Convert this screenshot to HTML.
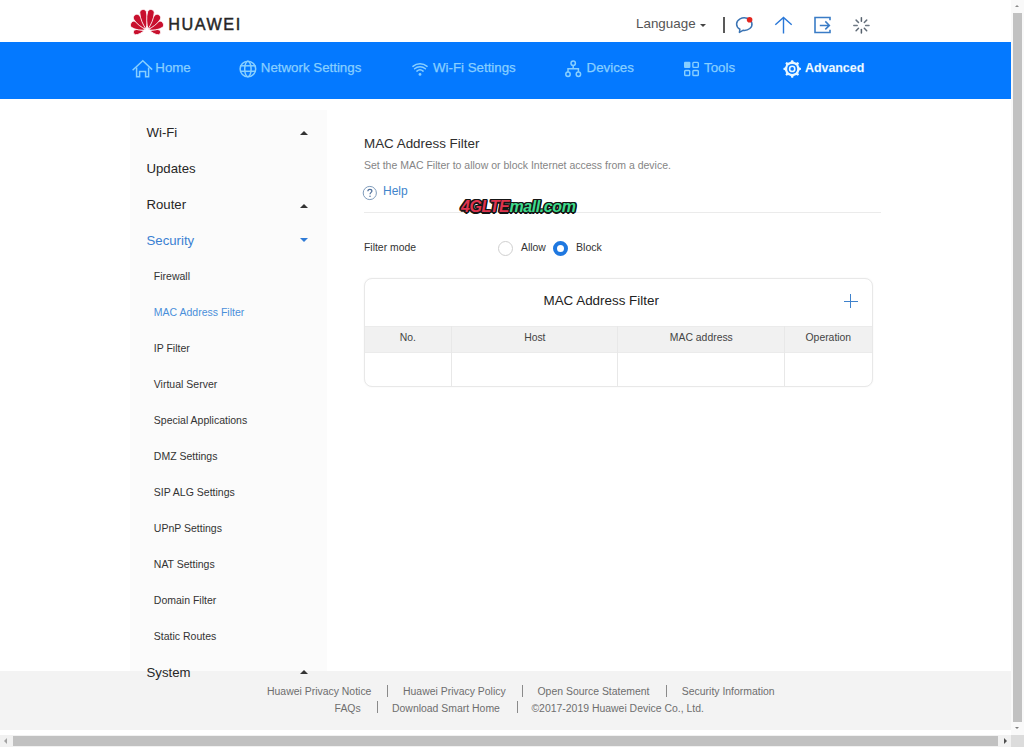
<!DOCTYPE html>
<html><head><meta charset="utf-8">
<style>
*{margin:0;padding:0;box-sizing:border-box}
html,body{width:1024px;height:747px;overflow:hidden;background:#fff;font-family:"Liberation Sans",sans-serif;color:#333}
.a{position:absolute;white-space:nowrap;line-height:1}
#hdr{position:absolute;left:0;top:0;width:1011px;height:42px;background:#fff}
#nav{position:absolute;left:0;top:42px;width:1011px;height:56.5px;background:#0479ff}
.nv{color:#88cfff;font-size:13.3px;-webkit-text-stroke:0.25px #88cfff}
#side{position:absolute;left:130px;top:110px;width:197px;height:561px;background:#fbfbfb}
.m{font-size:13.2px;color:#262626}
.s{font-size:10.5px;color:#333}
.car{position:absolute;width:0;height:0;border-left:4px solid transparent;border-right:4px solid transparent}
.up{border-bottom:4.4px solid #333}
.dn{border-top:4.4px solid #2f7bd6}
#foot{position:absolute;left:0;top:671px;width:1011px;height:58.5px;background:#f3f3f3}
.f{font-size:10.45px;color:#6e6e6e}
.th{font-size:10.4px;color:#444}
</style></head><body>
<div id="hdr"></div>
<!-- logo -->
<svg class="a" style="left:126px;top:4px" width="44" height="34" viewBox="0 0 44 34">
 <g fill="#c8102e" stroke="#fff" stroke-width="0.8" transform="translate(21,25)">
  <path d="M0,0 C-1.45,-2.12 -3.04,-5.83 -2.46,-9.12 C-1.74,-10.92 1.74,-10.92 2.46,-9.12 C3.04,-5.83 1.45,-2.12 0,0Z" transform="translate(-3.2,1.8) rotate(-100)"/>
  <path d="M0,0 C-1.45,-2.12 -3.04,-5.83 -2.46,-9.12 C-1.74,-10.92 1.74,-10.92 2.46,-9.12 C3.04,-5.83 1.45,-2.12 0,0Z" transform="scale(-1,1) translate(-3.2,1.8) rotate(-100)"/>
  <path d="M0,0 C-2.00,-3.20 -4.20,-8.80 -3.40,-13.76 C-2.40,-16.48 2.40,-16.48 3.40,-13.76 C4.20,-8.80 2.00,-3.20 0,0Z" transform="translate(-1.8,1.0) rotate(-65)"/>
  <path d="M0,0 C-2.00,-3.20 -4.20,-8.80 -3.40,-13.76 C-2.40,-16.48 2.40,-16.48 3.40,-13.76 C4.20,-8.80 2.00,-3.20 0,0Z" transform="scale(-1,1) translate(-1.8,1.0) rotate(-65)"/>
  <path d="M0,0 C-2.00,-3.68 -4.20,-10.12 -3.40,-15.82 C-2.40,-18.95 2.40,-18.95 3.40,-15.82 C4.20,-10.12 2.00,-3.68 0,0Z" transform="translate(-1.1,0.4) rotate(-38)"/>
  <path d="M0,0 C-2.00,-3.68 -4.20,-10.12 -3.40,-15.82 C-2.40,-18.95 2.40,-18.95 3.40,-15.82 C4.20,-10.12 2.00,-3.68 0,0Z" transform="scale(-1,1) translate(-1.1,0.4) rotate(-38)"/>
  <path d="M0,0 C-1.95,-4.00 -4.09,-11.00 -3.31,-17.20 C-2.34,-20.60 2.34,-20.60 3.31,-17.20 C4.09,-11.00 1.95,-4.00 0,0Z" transform="translate(-1.0,0) rotate(-10)"/>
  <path d="M0,0 C-1.95,-4.00 -4.09,-11.00 -3.31,-17.20 C-2.34,-20.60 2.34,-20.60 3.31,-17.20 C4.09,-11.00 1.95,-4.00 0,0Z" transform="scale(-1,1) translate(-1.0,0) rotate(-10)"/>
 </g>
</svg>
<div class="a" style="left:168.3px;top:15.5px;font-size:16.2px;color:#262626;letter-spacing:1.55px;-webkit-text-stroke:0.45px #262626">HUAWEI</div>

<div class="a" style="left:636px;top:17.2px;font-size:13.4px;color:#555">Language</div>
<div class="car" style="left:699.5px;top:23.8px;border-left-width:3px;border-right-width:3px;border-top:3px solid #444"></div>
<div class="a" style="left:723.3px;top:17.2px;width:1.5px;height:15.8px;background:#595959"></div>
<!-- chat -->
<svg class="a" style="left:732px;top:13px" width="26" height="23" viewBox="0 0 26 23">
 <path d="M10.96,17.3 A7.7,6.3 0 1 0 7.88,16.26 L7.4,19.4 Z" fill="none" stroke="#3b74b4" stroke-width="1.5" stroke-linejoin="round"/>
 <circle cx="17.6" cy="6.8" r="2.8" fill="#e3261f"/>
</svg>
<!-- arrow up -->
<svg class="a" style="left:773px;top:15px" width="21" height="20" viewBox="0 0 21 20">
 <path d="M10.5,2.6 L10.5,18.6 M2.3,9.8 L10.5,2.4 L18.7,9.8" fill="none" stroke="#2a78d8" stroke-width="1.4"/>
</svg>
<!-- exit -->
<svg class="a" style="left:812px;top:15px" width="21" height="20" viewBox="0 0 21 20">
 <path d="M18,5.2 L18,2.5 L3,2.5 L3,17.5 L18,17.5 L18,14.8" fill="none" stroke="#3a7cc6" stroke-width="1.6"/>
 <path d="M7.8,10.4 L17.4,10.4 M13.3,6.4 L17.4,10.4 L13.3,14.4" fill="none" stroke="#3a7cc6" stroke-width="1.5"/>
</svg>
<!-- spinner -->
<svg class="a" style="left:851px;top:15px" width="21" height="21" viewBox="0 0 21 21">
 <g stroke-width="1.5" stroke-linecap="round" transform="translate(10.4,10.4)">
  <line x1="0" y1="-4.2" x2="0" y2="-7.6" stroke="#56616d"/>
  <line x1="2.9" y1="-2.9" x2="5.3" y2="-5.3" stroke="#66717d"/>
  <line x1="4.2" y1="0" x2="7.6" y2="0" stroke="#6d7884"/>
  <line x1="2.9" y1="2.9" x2="5.3" y2="5.3" stroke="#5f6a76"/>
  <line x1="0" y1="4.2" x2="0" y2="7.6" stroke="#56616d"/>
  <line x1="-2.9" y1="2.9" x2="-5.3" y2="5.3" stroke="#5f6a76"/>
  <line x1="-4.2" y1="0" x2="-7.6" y2="0" stroke="#6d7884"/>
  <line x1="-2.9" y1="-2.9" x2="-5.3" y2="-5.3" stroke="#66717d"/>
 </g>
</svg>

<div id="nav"></div>
<!-- home -->
<svg class="a" style="left:131px;top:59px" width="22" height="20" viewBox="0 0 22 20">
 <path d="M1.6,11.2 L11.8,1.8 L21.2,10.6" fill="none" stroke="#88cfff" stroke-width="1.5"/>
 <path d="M5.6,8.4 L5.6,17.7 L8.6,17.7 L8.6,12.6 L14.6,12.6 L14.6,17.7 L17.6,17.7 L17.6,8.4" fill="none" stroke="#88cfff" stroke-width="1.5"/>
</svg>
<div class="a nv" style="left:155.3px;top:61.1px">Home</div>
<!-- globe -->
<svg class="a" style="left:238px;top:59px" width="20" height="20" viewBox="0 0 20 20">
 <g fill="none" stroke="#88cfff" stroke-width="1.5">
  <circle cx="9.9" cy="10" r="7.8"/>
  <ellipse cx="9.9" cy="10" rx="3.2" ry="7.8"/>
  <line x1="2.2" y1="6.8" x2="17.6" y2="6.8"/>
  <line x1="2.2" y1="12.3" x2="17.6" y2="12.3"/>
 </g>
</svg>
<div class="a nv" style="left:260.8px;top:61.1px">Network Settings</div>
<!-- wifi -->
<svg class="a" style="left:410px;top:59px" width="20" height="20" viewBox="0 0 20 20">
 <g fill="none" stroke="#88cfff" stroke-width="1.5" stroke-linecap="round">
  <path d="M2.93,7.37 A11,11 0 0 1 17.07,7.37"/>
  <path d="M4.58,9.78 A8.1,8.1 0 0 1 15.42,9.78"/>
  <path d="M6.91,12.12 A4.8,4.8 0 0 1 13.09,12.12"/>
 </g>
 <circle cx="10" cy="15.4" r="1.4" fill="#88cfff"/>
</svg>
<div class="a nv" style="left:433px;top:61.1px">Wi-Fi Settings</div>
<!-- devices -->
<svg class="a" style="left:563px;top:59px" width="20" height="20" viewBox="0 0 20 20">
 <g fill="none" stroke="#88cfff" stroke-width="1.5">
  <circle cx="10.2" cy="4.3" r="2.2"/>
  <circle cx="5" cy="15.2" r="2.2"/>
  <circle cx="15.4" cy="15.2" r="2.2"/>
  <path d="M10.2,6.5 L10.2,9.7 M5,13 L5,9.7 L15.4,9.7 L15.4,13"/>
 </g>
</svg>
<div class="a nv" style="left:586.6px;top:61.1px">Devices</div>
<!-- tools -->
<svg class="a" style="left:682px;top:59px" width="20" height="20" viewBox="0 0 20 20">
 <rect x="2" y="2.7" width="6.4" height="6.2" rx="1" fill="#88cfff"/>
 <g fill="none" stroke="#88cfff" stroke-width="1.4">
  <rect x="10.9" y="3.4" width="5.4" height="5" rx="0.8"/>
  <rect x="2.7" y="11.5" width="5" height="5" rx="0.8"/>
  <rect x="10.9" y="11.5" width="5.4" height="5" rx="0.8"/>
 </g>
</svg>
<div class="a nv" style="left:704px;top:61.1px">Tools</div>
<!-- gear -->
<svg class="a" style="left:782px;top:59px" width="20" height="20" viewBox="0 0 20 20">
 <g transform="translate(10.2,9.9)">
  <path d="M-2.76,-6.65 L-1.28,-7.29 L-0.92,-8.75 L0.92,-8.75 L1.28,-7.29 L2.76,-6.65 L4.24,-6.06 L5.54,-6.84 L6.84,-5.54 L6.06,-4.24 L6.65,-2.76 L7.29,-1.28 L8.75,-0.92 L8.75,0.92 L7.29,1.28 L6.65,2.76 L6.06,4.24 L6.84,5.54 L5.54,6.84 L4.24,6.06 L2.76,6.65 L1.28,7.29 L0.92,8.75 L-0.92,8.75 L-1.28,7.29 L-2.76,6.65 L-4.24,6.06 L-5.54,6.84 L-6.84,5.54 L-6.06,4.24 L-6.65,2.76 L-7.29,1.28 L-8.75,0.92 L-8.75,-0.92 L-7.29,-1.28 L-6.65,-2.76 L-6.06,-4.24 L-6.84,-5.54 L-5.54,-6.84 L-4.24,-6.06Z" fill="#e8f7ff"/>
  <circle r="5.0" fill="#0479ff"/>
  <circle r="3.4" fill="#e8f7ff"/>
  <circle r="1.8" fill="#0479ff"/>
 </g>
</svg>
<div class="a nv" style="left:805px;top:62.1px;color:#fff;font-weight:bold;font-size:12.4px">Advanced</div>

<!-- sidebar -->
<div id="side"></div>
<div class="a m" style="left:146.5px;top:126px">Wi-Fi</div>
<div class="car up" style="left:300px;top:131.3px"></div>
<div class="a m" style="left:146.5px;top:162px">Updates</div>
<div class="a m" style="left:146.5px;top:198px">Router</div>
<div class="car up" style="left:300px;top:203.5px"></div>
<div class="a m" style="left:146.5px;top:234px;color:#3a80d2">Security</div>
<div class="car dn" style="left:300px;top:238.4px"></div>
<div class="a s" style="left:153.8px;top:270.7px">Firewall</div>
<div class="a s" style="left:153.8px;top:306.7px;color:#4a8fda">MAC Address Filter</div>
<div class="a s" style="left:153.8px;top:342.7px">IP Filter</div>
<div class="a s" style="left:153.8px;top:378.7px">Virtual Server</div>
<div class="a s" style="left:153.8px;top:414.7px">Special Applications</div>
<div class="a s" style="left:153.8px;top:450.7px">DMZ Settings</div>
<div class="a s" style="left:153.8px;top:486.7px">SIP ALG Settings</div>
<div class="a s" style="left:153.8px;top:522.7px">UPnP Settings</div>
<div class="a s" style="left:153.8px;top:558.7px">NAT Settings</div>
<div class="a s" style="left:153.8px;top:594.7px">Domain Filter</div>
<div class="a s" style="left:153.8px;top:630.7px">Static Routes</div>

<!-- content -->
<div class="a" style="left:364px;top:136.5px;font-size:13.4px;color:#2e2e2e">MAC Address Filter</div>
<div class="a" style="left:364px;top:160px;font-size:10.5px;color:#858585">Set the MAC Filter to allow or block Internet access from a device.</div>
<svg class="a" style="left:362px;top:185px" width="16" height="16" viewBox="0 0 16 16">
 <circle cx="7.8" cy="8" r="6.6" fill="none" stroke="#7f9cbc" stroke-width="1"/>
 <path d="M5.9,6.3 C5.9,5 6.8,4.3 7.9,4.3 C9,4.3 9.9,5 9.9,6.1 C9.9,7.4 8,7.5 8,9.3" fill="none" stroke="#4f6f9a" stroke-width="1.2"/>
 <circle cx="8" cy="11.3" r="0.75" fill="#4f6f9a"/>
</svg>
<div class="a" style="left:383px;top:185px;font-size:12px;color:#4184cc">Help</div>
<div class="a" style="left:364px;top:212px;width:517px;height:1px;background:#ebebeb"></div>

<div class="a" style="left:364px;top:242.5px;font-size:10.4px;color:#333">Filter mode</div>
<div class="a" style="left:498px;top:240.6px;width:15px;height:15px;border:1px solid #cfcfcf;border-radius:50%;background:#fff"></div>
<div class="a" style="left:521px;top:242.6px;font-size:10.4px;color:#333">Allow</div>
<div class="a" style="left:553.2px;top:240.6px;width:15px;height:15px;border:4.2px solid #1f78e0;border-radius:50%;background:#fff"></div>
<div class="a" style="left:576px;top:241.8px;font-size:10.6px;color:#333">Block</div>

<!-- card -->
<div class="a" style="left:363.5px;top:277.6px;width:509px;height:109px;border:1px solid #e8e8e8;border-radius:8px;background:#fff;overflow:hidden;box-shadow:0 0 2px rgba(0,0,0,0.05)">
 <div class="a" style="left:179px;top:15.4px;font-size:13.4px;color:#222">MAC Address Filter</div>
 <div class="a" style="left:479px;top:22.2px;width:14px;height:1.2px;background:#3f82cc"></div>
 <div class="a" style="left:485.4px;top:15.7px;width:1.2px;height:14px;background:#3f82cc"></div>
 <div class="a" style="left:0;top:47.5px;width:507px;height:27px;background:#f1f1f1;border-top:1px solid #ebebeb;border-bottom:1px solid #ebebeb"></div>
 <div class="a" style="left:86.7px;top:47.5px;width:1px;height:62px;background:#e8e8e8"></div>
 <div class="a" style="left:252.2px;top:47.5px;width:1px;height:62px;background:#e8e8e8"></div>
 <div class="a" style="left:419.7px;top:47.5px;width:1px;height:62px;background:#e8e8e8"></div>
 <div class="a th" style="left:0;width:86.7px;top:54.5px;text-align:center">No.</div>
 <div class="a th" style="left:87.7px;width:165.3px;top:54.5px;text-align:center">Host</div>
 <div class="a th" style="left:254px;width:165.7px;top:54.5px;text-align:center">MAC address</div>
 <div class="a th" style="left:420.7px;width:86.3px;top:54.5px;text-align:center">Operation</div>
</div>

<!-- watermark -->
<div class="a" style="left:461px;top:199px;font-size:16px;font-weight:bold;font-style:italic;letter-spacing:-0.4px;text-shadow:-1.2px -1.2px 0 #151515,1.2px -1.2px 0 #151515,-1.2px 1.2px 0 #151515,1.2px 1.2px 0 #151515,0 -1.5px 0 #151515,0 1.5px 0 #151515,-1.5px 0 0 #151515,1.5px 0 0 #151515"><span style="color:#e0344e">4GLTE</span><span style="color:#3edc8c">mall.com</span></div>

<!-- footer -->
<div id="foot"></div>
<div class="a m" style="left:146.5px;top:666px">System</div>
<div class="car up" style="left:300px;top:670px"></div>
<div class="a f" style="left:267px;top:686.5px">Huawei Privacy Notice</div>
<div class="a" style="left:387.1px;top:685px;width:1px;height:11.5px;background:#8a8a8a"></div>
<div class="a f" style="left:403px;top:686.5px">Huawei Privacy Policy</div>
<div class="a" style="left:521.6px;top:685px;width:1px;height:11.5px;background:#8a8a8a"></div>
<div class="a f" style="left:537.5px;top:686.5px">Open Source Statement</div>
<div class="a" style="left:666.1px;top:685px;width:1px;height:11.5px;background:#8a8a8a"></div>
<div class="a f" style="left:681.8px;top:686.5px">Security Information</div>
<div class="a f" style="left:334.6px;top:703.5px">FAQs</div>
<div class="a" style="left:377.4px;top:701px;width:1px;height:12px;background:#8a8a8a"></div>
<div class="a f" style="left:392px;top:703.5px">Download Smart Home</div>
<div class="a" style="left:516.8px;top:701px;width:1px;height:12px;background:#8a8a8a"></div>
<div class="a f" style="left:531.4px;top:703.5px">©2017-2019 Huawei Device Co., Ltd.</div>

<!-- scrollbars -->
<div class="a" style="left:1011px;top:0;width:13px;height:735px;background:#f9f9f9"></div>
<div class="a" style="left:1013px;top:13px;width:9px;height:709px;background:#c1c1c1"></div>
<div class="car" style="left:1014.6px;top:5.4px;border-left-width:2.8px;border-right-width:2.8px;border-bottom:2.5px solid #8a8a8a"></div>
<div class="car" style="left:1014.6px;top:726.6px;border-left-width:2.8px;border-right-width:2.8px;border-top:2.6px solid #7a7a7a"></div>
<div class="a" style="left:0;top:735px;width:1011px;height:12px;background:#f1f1f1"></div>
<div class="a" style="left:13px;top:736px;width:985px;height:10px;background:#c1c1c1"></div>
<div class="car" style="left:4px;top:738px;border-top:3px solid transparent;border-bottom:3px solid transparent;border-right:3px solid #a3a3a3;border-left:0"></div>
<div class="car" style="left:1004px;top:738px;border-top:3px solid transparent;border-bottom:3px solid transparent;border-left:3px solid #505050;border-right:0"></div>
<div class="a" style="left:1011px;top:735px;width:13px;height:12px;background:#dcdcdc"></div>
</body></html>
